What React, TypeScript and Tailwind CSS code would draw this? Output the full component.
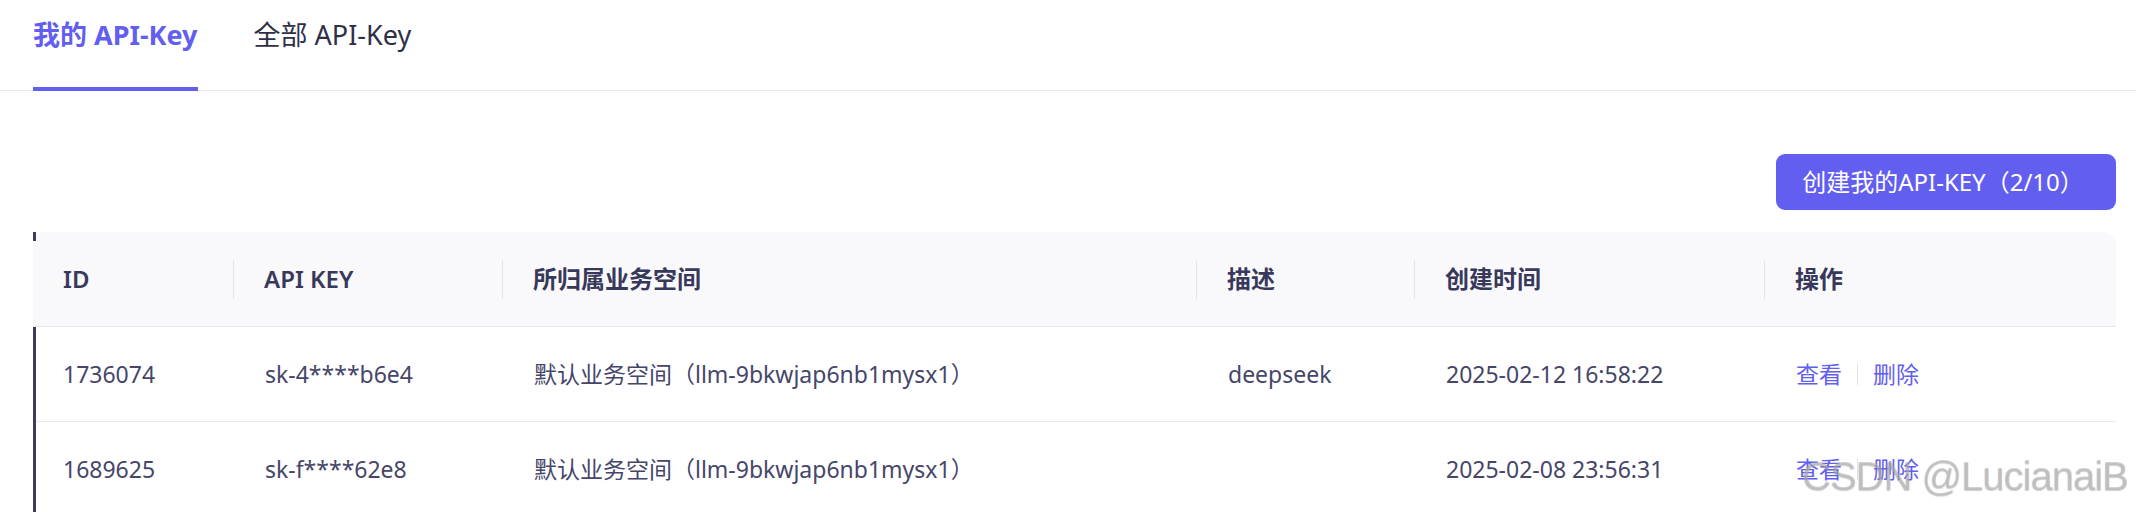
import React from 'react';

const cols = 'grid grid-cols-[201px_269px_694px_218px_350px_1fr]';

const headers = ['ID', 'API KEY', '所归属业务空间', '描述', '创建时间', '操作'];

const rows = [
  {
    id: '1736074',
    key: 'sk-4****b6e4',
    space: '默认业务空间（llm-9bkwjap6nb1mysx1）',
    desc: 'deepseek',
    created: '2025-02-12 16:58:22',
  },
  {
    id: '1689625',
    key: 'sk-f****62e8',
    space: '默认业务空间（llm-9bkwjap6nb1mysx1）',
    desc: '',
    created: '2025-02-08 23:56:31',
  },
];

export default function App() {
  return (
    <div
      className="relative h-[512px] overflow-hidden bg-white"
      style={{ fontFamily: '"Noto Sans", "Noto Sans CJK SC", sans-serif' }}
    >
      {/* tabs */}
      <div className="flex h-[91px] gap-[56px] border-b border-[#e8e8ee] pl-[33px]">
        <div className="relative flex h-full items-start pt-[14px]">
          <span className="text-[27px] font-bold leading-[42px] text-[#625ef0]">我的 API-Key</span>
          <div className="absolute bottom-[-1px] left-0 right-0 h-[4px] bg-[#625ef0]" />
        </div>
        <div className="flex h-full items-start pt-[14px]">
          <span className="text-[27px] leading-[42px] text-[#2f2f48]">全部 API-Key</span>
        </div>
      </div>

      <div className="pl-[33px] pr-[20px]">
        {/* toolbar */}
        <div className="flex justify-end pt-[63px]">
          <button className="h-[56px] w-[340px] rounded-[9px] bg-[#625ef0] pr-[6px] text-[24px] text-white">
            创建我的API-KEY（2/10）
          </button>
        </div>

        {/* table */}
        <div className="relative mt-[22px]">
          <div className="absolute left-0 top-0 z-10 h-[9px] w-[3px] bg-[#3d3b5e]" />
          <div className="absolute bottom-0 left-0 top-[95px] z-10 w-[3px] bg-[#3d3b5e]" />

          <div className={`${cols} h-[95px] rounded-t-[12px] border-b border-[#e6e6ee] bg-[#f9f9fb]`}>
            {headers.map((h, i) => (
              <div key={h} className="flex items-center justify-between pl-[30px]">
                <span className="text-[24px] font-semibold text-[#38385a]">{h}</span>
                {i < headers.length - 1 && <span className="h-[39px] w-px bg-[#e3e3ea]" />}
              </div>
            ))}
          </div>

          {rows.map((r) => (
            <div key={r.id} className={`${cols} h-[95px] border-b border-[#e8e8ee] text-[23px] text-[#46466a]`}>
              <div className="flex items-center pl-[30px]">{r.id}</div>
              <div className="flex items-center pl-[31px]">{r.key}</div>
              <div className="flex items-center pl-[31px]">{r.space}</div>
              <div className="flex items-center pl-[31px]">{r.desc}</div>
              <div className="flex items-center pl-[31px]">{r.created}</div>
              <div className="flex items-center pl-[31px] text-[#625ef0]">
                <span>查看</span>
                <span className="mx-[15px] h-[21px] w-px bg-[#e2e2e8]" />
                <span>删除</span>
              </div>
            </div>
          ))}
        </div>
      </div>

      {/* watermark */}
      <div
        className="pointer-events-none absolute left-[1802px] top-[456px] whitespace-nowrap text-[40px] leading-none tracking-[-1px] text-[rgba(175,175,175,0.55)]"
        style={{ fontFamily: '"Liberation Sans", Arial, sans-serif', textShadow: '0 1px 1px rgba(120,120,120,0.35)' }}
      >
        CSDN @LucianaiB
      </div>
    </div>
  );
}
